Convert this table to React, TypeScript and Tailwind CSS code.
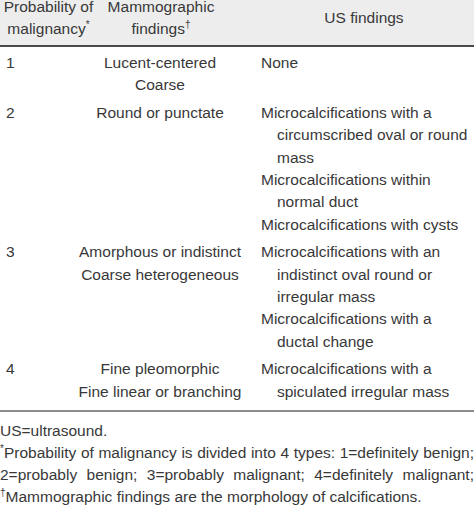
import React from "react";

const Sup = ({ children }: { children: React.ReactNode }) => (
  <span className="relative -top-[6px] text-[10px] leading-none">{children}</span>
);

type Row = { p: string; m: string[]; us: string[][] };

const rows: Row[] = [
  { p: "1", m: ["Lucent-centered", "Coarse"], us: [["None"]] },
  {
    p: "2",
    m: ["Round or punctate"],
    us: [
      ["Microcalcifications with a", "circumscribed oval or round", "mass"],
      ["Microcalcifications within", "normal duct"],
      ["Microcalcifications with cysts"],
    ],
  },
  {
    p: "3",
    m: ["Amorphous or indistinct", "Coarse heterogeneous"],
    us: [
      ["Microcalcifications with an", "indistinct oval round or", "irregular mass"],
      ["Microcalcifications with a", "ductal change"],
    ],
  },
  {
    p: "4",
    m: ["Fine pleomorphic", "Fine linear or branching"],
    us: [["Microcalcifications with a", "spiculated irregular mass"]],
  },
];

export default function App() {
  return (
    <div className="w-[474px] h-[506px] overflow-hidden bg-white text-[#383838] font-['Liberation_Sans',Arial,sans-serif] text-[15.5px] leading-[22.4px]">
      <div className="-mt-[4px] grid grid-cols-[97px_126px_251px] bg-[#ededed] pb-[5px] border-b-2 border-[#4a4a4a] leading-[22px]">
        <div className="text-center">
          <div>Probability of</div>
          <div>
            malignancy<Sup>*</Sup>
          </div>
        </div>
        <div className="text-center pl-[2px]">
          <div>Mammographic</div>
          <div>
            findings<Sup>†</Sup>
          </div>
        </div>
        <div className="flex items-center justify-center pl-[31px]">US findings</div>
      </div>
      <div className="pb-[7px] border-b-2 border-[#8c8c8c]">
        {rows.map((r) => (
          <div key={r.p} className="grid grid-cols-[78px_164px_232px] pt-[5px]">
            <div className="pl-[6px]">{r.p}</div>
            <div className="text-center whitespace-nowrap">
              {r.m.map((t) => (
                <div key={t}>{t}</div>
              ))}
            </div>
            <div className="pl-[19px] whitespace-nowrap">
              {r.us.map((g, i) => (
                <div key={i}>
                  {g.map((t, j) => (
                    <div key={j} className={j > 0 ? "pl-[16px]" : ""}>
                      {t}
                    </div>
                  ))}
                </div>
              ))}
            </div>
          </div>
        ))}
      </div>
      <div className="mt-[8px] leading-[22px]">
        <div>US=ultrasound.</div>
        <div className="text-justify [text-align-last:justify]">
          <Sup>*</Sup>Probability of malignancy is divided into 4 types: 1=definitely benign;
        </div>
        <div className="text-justify [text-align-last:justify]">
          2=probably benign; 3=probably malignant; 4=definitely malignant;
        </div>
        <div>
          <Sup>†</Sup>Mammographic findings are the morphology of calcifications.
        </div>
      </div>
    </div>
  );
}
